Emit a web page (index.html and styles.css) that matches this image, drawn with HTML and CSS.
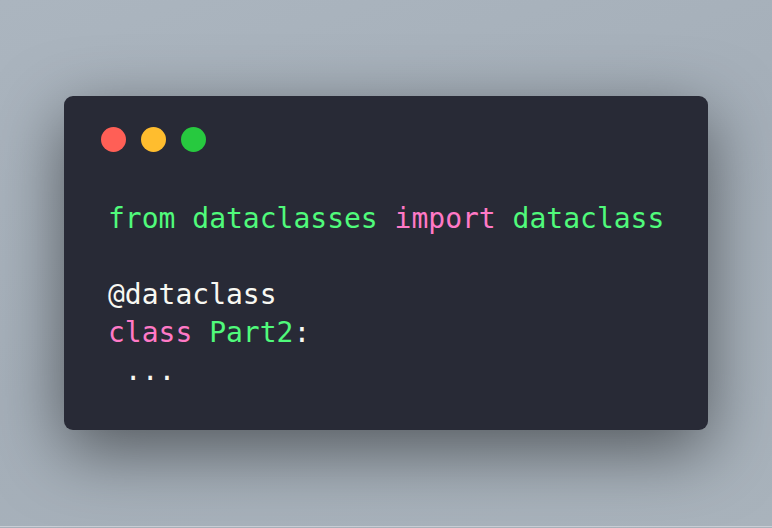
FILE: index.html
```html
<!DOCTYPE html>
<html>
<head>
<meta charset="utf-8">
<link rel="stylesheet" href="styles.css">
</head>
<body>
<div class="stage">
  <div class="window">
    <div class="lights">
      <span class="dot red"></span>
      <span class="dot yellow"></span>
      <span class="dot green"></span>
    </div>
<pre class="code"><span class="g">from dataclasses</span> <span class="p">import</span> <span class="g">dataclass</span>

<span class="w">@dataclass</span>
<span class="p">class</span> <span class="g">Part2</span><span class="w">:</span>
<span class="w"> ...</span></pre>
  </div>
</div>
</body>
</html>
```
FILE: styles.css
```css
html, body {
  margin: 0;
  padding: 0;
}
body {
  width: 772px;
  height: 528px;
  overflow: hidden;
  background: linear-gradient(160deg, #abb5bf 0%, #a5afb9 50%, #a9b3bc 100%);
}
.stage {
  height: 527px;
  display: flex;
  justify-content: center;
  align-items: flex-start;
  padding-top: 96px;
  box-sizing: border-box;
  border-bottom: 1px solid #c9ced5;
}
.window {
  width: 644px;
  height: 334px;
  box-sizing: border-box;
  background: #282a36;
  border-radius: 9px;
  box-shadow: 0 20px 68px rgba(0, 0, 0, 0.5);
  padding: 31px 0 0 37px;
}
.lights {
  display: flex;
  gap: 15px;
  height: 25px;
}
.dot {
  width: 25px;
  height: 25px;
  border-radius: 50%;
  display: block;
}
.red { background: #ff5f56; }
.yellow { background: #ffbd2e; }
.green { background: #27c93f; }
.code {
  margin: 48px 0 0 7px;
  font-family: "DejaVu Sans Mono", monospace;
  font-size: 28px;
  line-height: 38px;
  color: #f8f8f2;
}
.g { color: #50fa7b; }
.p { color: #ff79c6; }
.w { color: #f8f8f2; }
```
